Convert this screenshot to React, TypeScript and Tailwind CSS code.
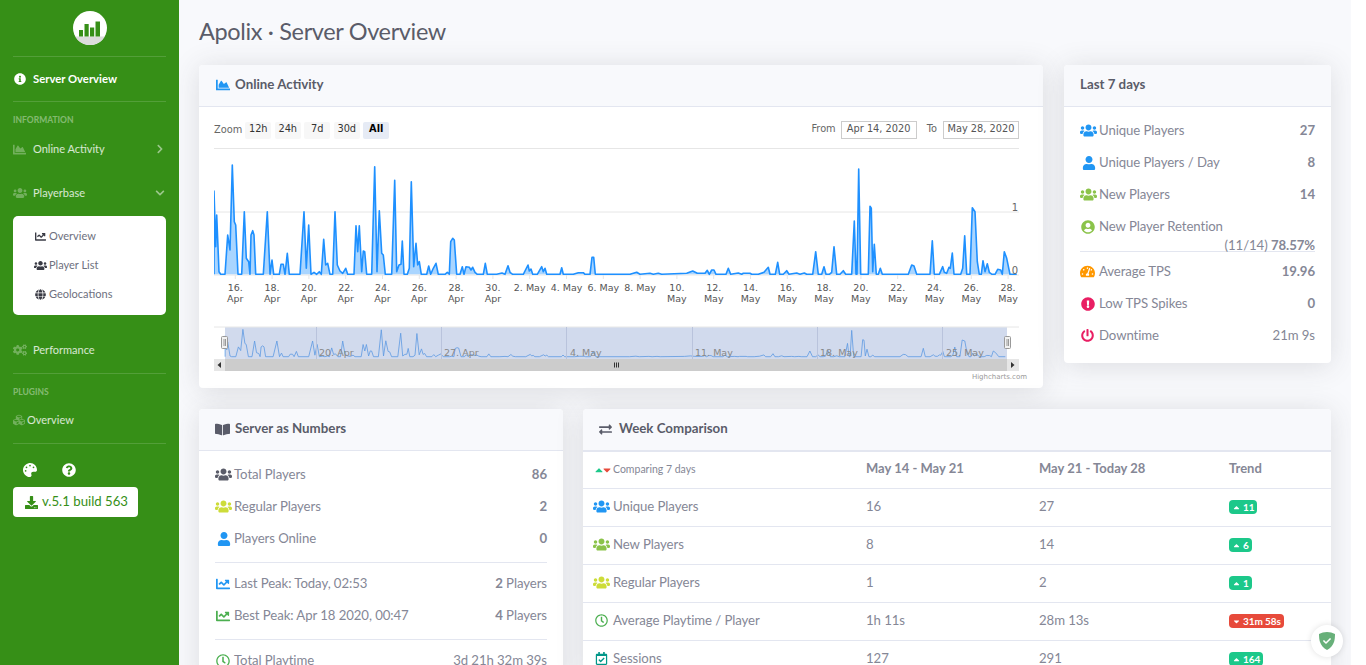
import type { ReactNode } from 'react'
import {
  FaBookOpen,
  FaCaretDown,
  FaCaretUp,
  FaChartArea,
  FaChartLine,
  FaCheck,
  FaChevronDown,
  FaChevronRight,
  FaCogs,
  FaCubes,
  FaDownload,
  FaExchangeAlt,
  FaExclamationCircle,
  FaGlobe,
  FaInfoCircle,
  FaPalette,
  FaPowerOff,
  FaQuestionCircle,
  FaRegCalendarCheck,
  FaRegClock,
  FaTachometerAlt,
  FaUser,
  FaUserCircle,
  FaUsers,
} from 'react-icons/fa'

// points read off the chart, in 3x crop coordinates
const leftPts = [
  [42, 628], [42, 378], [47, 545], [50, 450], [57, 620], [62, 628], [75, 628], [83, 510], [90, 555], [97, 300], [103, 470], [107, 480], [114, 628], [125, 628], [133, 440], [139, 580], [146, 590], [150, 628], [153, 510], [158, 497], [162, 510], [167, 628], [190, 628], [202, 440], [210, 628], [216, 585], [221, 628], [238, 628], [243, 598], [250, 598], [255, 628], [262, 565], [268, 628], [300, 628], [312, 440], [319, 610], [326, 480], [333, 628], [342, 622], [350, 628], [358, 620], [364, 628], [371, 523], [377, 600], [383, 595], [390, 628], [398, 628], [405, 440], [412, 600], [420, 618], [428, 625], [437, 610], [443, 628], [462, 628], [468, 482], [473, 560], [478, 482], [485, 620], [490, 558], [494, 560], [500, 628], [515, 628], [524, 305], [531, 620], [538, 437], [545, 565], [550, 570], [556, 628], [575, 628], [584, 346], [590, 620], [597, 600], [603, 598], [607, 528], [612, 628], [622, 628], [628, 610], [634, 350], [641, 605], [648, 535], [653, 600], [658, 590], [664, 628], [680, 628], [686, 603], [692, 628], [700, 610], [708, 595], [715, 628], [735, 628], [742, 622], [748, 628], [752, 530], [758, 520], [763, 525], [770, 628], [780, 628], [787, 605], [792, 628], [798, 605], [808, 607], [813, 615], [818, 607], [825, 622], [832, 628], [850, 628], [856, 595], [862, 628], [890, 628], [906, 624], [915, 628], [924, 602], [930, 622], [938, 628], [970, 628], [984, 600], [988, 618], [993, 612], [998, 628], [1012, 628], [1025, 605], [1030, 620], [1035, 610], [1040, 628], [1080, 628], [1085, 608], [1090, 628], [1120, 628], [1135, 623], [1150, 623], [1155, 628], [1170, 628], [1176, 577], [1181, 577], [1186, 628],
]
const rightPts = [
  [30, 628], [50, 622], [60, 628], [90, 625], [100, 628], [115, 625], [125, 628], [200, 625], [218, 618], [232, 625], [255, 625], [262, 616], [268, 628], [275, 615], [282, 615], [288, 628], [318, 628], [325, 610], [332, 628], [355, 624], [365, 628], [370, 625], [390, 625], [395, 628], [415, 628], [432, 622], [445, 607], [450, 628], [466, 628], [473, 592], [479, 628], [490, 628], [500, 617], [507, 628], [530, 624], [540, 628], [553, 624], [560, 628], [578, 628], [587, 560], [595, 628], [605, 628], [612, 605], [618, 628], [628, 628], [635, 622], [642, 545], [650, 628], [660, 628], [670, 617], [677, 628], [695, 628], [703, 468], [708, 628], [711, 628], [716, 312], [722, 628], [745, 628], [750, 424], [754, 430], [758, 620], [763, 538], [769, 628], [775, 628], [781, 610], [787, 628], [865, 628], [875, 600], [882, 603], [890, 628], [930, 628], [937, 527], [943, 628], [958, 628], [968, 605], [973, 622], [980, 625], [987, 607], [991, 610], [997, 564], [1002, 628], [1022, 628], [1028, 610], [1034, 512], [1040, 628], [1050, 628], [1057, 428], [1065, 440], [1072, 590], [1078, 628], [1084, 628], [1089, 587], [1095, 620], [1102, 596], [1108, 622], [1116, 628], [1125, 628], [1133, 613], [1142, 615], [1147, 628], [1153, 560], [1160, 580], [1170, 628], [1190, 628],
]
const points = [
  ...leftPts.map(([x, y]) => [x / 3 + 200, y / 3 + 65]),
  ...rightPts.map(([x, y]) => [x / 3 + 620, y / 3 + 65]),
]
const base = 628 / 3 + 65
const line = points.map(([x, y]) => `${x.toFixed(1)},${y.toFixed(1)}`).join(' ')
const area = `${points[0][0]},${base} ${line} ${points[points.length - 1][0]},${base}`
const navLine = points
  .map(([x, y]) => `${(17.1 + x * 0.972).toFixed(1)},${(356.7 - (base - y) * 0.25).toFixed(1)}`)
  .join(' ')

const tickLabels = [
  ['16.', 'Apr'], ['18.', 'Apr'], ['20.', 'Apr'], ['22.', 'Apr'], ['24.', 'Apr'], ['26.', 'Apr'], ['28.', 'Apr'], ['30.', 'Apr'],
  ['2. May'], ['4. May'], ['6. May'], ['8. May'],
  ['10.', 'May'], ['12.', 'May'], ['14.', 'May'], ['16.', 'May'], ['18.', 'May'], ['20.', 'May'], ['22.', 'May'], ['24.', 'May'], ['26.', 'May'], ['28.', 'May'],
]
const navLabels: [number, string][] = [[319, '20. Apr'], [444, '27. Apr'], [570, '4. May'], [695, '11. May'], [820, '18. May'], [946, '25. May']]

function ActivityChart() {
  return (
    <svg viewBox="214 146 815 236" className="block h-[236px] w-[815px] [font-family:'DejaVu_Sans',sans-serif]">
      <line x1="214" x2="1019" y1="148.5" y2="148.5" stroke="#e6e6e6" />
      <line x1="214" x2="1019" y1="212" y2="212" stroke="#e6e6e6" />
      <line x1="214" x2="1019" y1="275" y2="275" stroke="#e6e6e6" />
      <polygon points={area} fill="#1e90ff" fillOpacity="0.38" />
      <polyline points={line} fill="none" stroke="#1e90ff" strokeWidth="1.6" strokeLinejoin="round" />
      <text x="1018" y="211" textAnchor="end" fontSize="10" fill="#666">1</text>
      <text x="1018" y="274" textAnchor="end" fontSize="10" fill="#666">0</text>
      {tickLabels.map((t, i) => {
        const x = 235.3 + 36.8 * i
        return (
          <g key={i}>
            <line x1={x} x2={x} y1="275" y2="279" stroke="#e6e6e6" />
            {t.map((s, j) => (
              <text key={s} x={x} y={290.5 + j * 11} textAnchor="middle" fontSize="9.5" fill="#555">
                {s}
              </text>
            ))}
          </g>
        )
      })}

      {/* navigator */}
      <line x1="214" x2="1019" y1="327" y2="327" stroke="#e6e6e6" />
      <polyline points={navLine} fill="none" stroke="#5ba4f0" strokeOpacity="0.8" strokeWidth="1" />
      <rect x="225" y="327.5" width="782" height="31.5" fill="#6685c2" fillOpacity="0.3" />
      {[316, 441, 566, 692, 817, 942].map((x) => (
        <line key={x} x1={x + 0.5} x2={x + 0.5} y1="327" y2="359" stroke="#b9c3dc" />
      ))}
      {navLabels.map(([x, s]) => (
        <text key={s} x={x} y="356" fontSize="9.5" fill="#888">{s}</text>
      ))}
      {[221.5, 1004.5].map((x) => (
        <g key={x}>
          <rect x={x} y="336.5" width="6" height="12" rx="1" fill="#f2f2f2" stroke="#999" />
          <line x1={x + 2.5} x2={x + 2.5} y1="339" y2="346" stroke="#999" />
          <line x1={x + 4} x2={x + 4} y1="339" y2="346" stroke="#999" />
        </g>
      ))}
      <rect x="213" y="359" width="806" height="12" fill="#cccccc" />
      <rect x="213" y="359" width="12" height="12" fill="#e6e6e6" />
      <rect x="1007" y="359" width="12" height="12" fill="#e6e6e6" />
      <polygon points="221,362 217.5,365 221,368" fill="#333" />
      <polygon points="1011,362 1014.5,365 1011,368" fill="#333" />
      {[614.5, 616.5, 618.5].map((x) => (
        <line key={x} x1={x} x2={x} y1="362.5" y2="367.5" stroke="#333" />
      ))}
      <text x="1027" y="379" textAnchor="end" fontSize="7" fill="#999">Highcharts.com</text>
    </svg>
  )
}

function Logo() {
  return (
    <svg viewBox="0 0 34 34" className="h-[34px] w-[34px]">
      <circle cx="17" cy="17" r="17" fill="#fff" />
      <path d="M2.2 25.5h29.6A17 17 0 0 1 2.2 25.5z" fill="#dcdcdc" />
      <path d="M6 19h4v6.5H6zM11.5 13h4.2v12.5h-4.2zM17 16.5h4.2v9H17zM22.5 10.5h4.500v15h-4.500z" fill="#368f17" />
    </svg>
  )
}

function SideHr() {
  return <div className="mx-[13px] h-px bg-white/15" />
}

function SideItem({ icon, label, right, active }: { icon: ReactNode; label: string; right?: ReactNode; active?: boolean }) {
  return (
    <div className={`flex h-[44px] items-center pl-[13px] pr-[14px] ${active ? 'text-[11.3px] font-bold text-white' : 'text-[11px] text-white/80'}`}>
      <span className={`flex w-[20px] shrink-0 ${active ? 'pl-px text-white' : 'text-white/30'}`}>{icon}</span>
      <span className="flex-1">{label}</span>
      {right}
    </div>
  )
}

function SubItem({ icon, label }: { icon: ReactNode; label: string }) {
  return (
    <div className="flex h-[29px] items-center pl-[19px] text-[11px] text-[#6e707e]">
      <span className="flex w-[17px] shrink-0 justify-center text-[#3a3b45]">{icon}</span>
      {label}
    </div>
  )
}

function Sidebar() {
  return (
    <aside className="flex h-[665px] w-[179px] shrink-0 flex-col bg-[#368f17]">
      <div className="flex h-[56px] justify-center pt-[11px]">
        <Logo />
      </div>
      <SideHr />
      <SideItem active icon={<FaInfoCircle className="text-[12px]" />} label="Server Overview" />
      <SideHr />
      <div className="h-[25px] pl-[13px] pt-[12px] text-[8.5px] font-bold leading-[12px] text-white/40">INFORMATION</div>
      <SideItem
        icon={<FaChartArea className="text-[13px]" />}
        label="Online Activity"
        right={<FaChevronRight className="text-[10px] text-white/50" />}
      />
      <SideItem
        icon={<FaUsers className="text-[14px]" />}
        label="Playerbase"
        right={<FaChevronDown className="text-[10px] text-white/50" />}
      />
      <div className="mx-[13px] mt-px rounded-[5px] bg-white py-[6px]">
        <SubItem icon={<FaChartLine className="text-[11px]" />} label="Overview" />
        <SubItem icon={<FaUsers className="text-[13px]" />} label="Player List" />
        <SubItem icon={<FaGlobe className="text-[11px]" />} label="Geolocations" />
      </div>
      <div className="mt-[13px]">
        <SideItem icon={<FaCogs className="text-[14px]" />} label="Performance" />
      </div>
      <div className="mt-px">
        <SideHr />
      </div>
      <div className="h-[24px] pl-[13px] pt-[12px] text-[8.5px] font-bold leading-[12px] text-white/40">PLUGINS</div>
      <div className="flex h-[44px] items-center pl-[13px] text-[11px] text-white/80">
        <span className="flex w-[14px] shrink-0 text-white/30">
          <FaCubes className="text-[12px]" />
        </span>
        Overview
      </div>
      <div className="mt-px">
        <SideHr />
      </div>
      <div className="mt-[19px] flex items-center pl-[23px] text-white">
        <FaPalette className="text-[14px]" />
        <FaQuestionCircle className="ml-[25px] text-[14px]" />
      </div>
      <div className="ml-[13px] mt-[10px] flex h-[30px] w-[125px] items-center rounded-[4px] bg-white pl-[12px] text-[13.2px] text-[#368f17]">
        <FaDownload className="mr-[4px] text-[13px]" />
        v.5.1 build 563
      </div>
    </aside>
  )
}

function Card({ title, icon, className, children }: { title: string; icon?: ReactNode; className: string; children: ReactNode }) {
  return (
    <section className={`rounded-[4px] bg-white shadow-[0_2.4px_28px_0_rgba(58,59,69,0.15)] ${className}`}>
      <header className="flex h-[42px] items-center gap-[5px] rounded-t-[4px] border-b border-[#e3e6f0] bg-[#f8f9fc] pb-px pl-[16px] text-[13.3px] font-bold text-[#5a5c69]">
        {icon}
        {title}
      </header>
      {children}
    </section>
  )
}

function StatRow({ icon, label, value }: { icon: ReactNode; label: string; value: ReactNode }) {
  return (
    <div className="flex h-[32px] items-center pb-px text-[13.2px] tracking-[-0.08px] text-[#858796]">
      <span className="flex w-[19px] shrink-0">{icon}</span>
      <span className="flex-1">{label}</span>
      <span>{value}</span>
    </div>
  )
}

function Hr({ className }: { className: string }) {
  return <div className={`h-px bg-[#e3e6f0] ${className}`} />
}

function ZoomBtn({ label, active }: { label: string; active?: boolean }) {
  return (
    <span className={`flex h-[17px] w-[26px] items-center justify-center rounded-[2px] pb-px ${active ? 'bg-[#e6ebf5] font-bold text-black' : 'bg-[#f7f7f7] text-[#333]'}`}>
      {label}
    </span>
  )
}

function DateBox({ label }: { label: string }) {
  return <span className="flex h-[18px] w-[76px] items-center justify-center border border-[#cccccc] pb-px text-[#555]">{label}</span>
}

function OnlineActivityCard() {
  return (
    <Card title="Online Activity" icon={<FaChartArea className="ml-px text-[14px] text-[#2196f3]" />} className="w-[844px]">
      <div className="h-[281px] pl-[15px] pt-[14px]">
        <div className="flex h-[18px] w-[805px] items-center text-[9.8px] [font-family:'DejaVu_Sans',sans-serif]">
          <span className="mr-[3px] text-[#666]">Zoom</span>
          <div className="flex gap-[3.5px]">
            <ZoomBtn label="12h" />
            <ZoomBtn label="24h" />
            <ZoomBtn label="7d" />
            <ZoomBtn label="30d" />
            <ZoomBtn label="All" active />
          </div>
          <span className="ml-auto mr-[5px] pb-px text-[#666]">From</span>
          <DateBox label="Apr 14, 2020" />
          <span className="ml-[10px] mr-[6px] pb-px text-[#666]">To</span>
          <DateBox label="May 28, 2020" />
        </div>
        <div className="mt-[7px]">
          <ActivityChart />
        </div>
      </div>
    </Card>
  )
}

function LastDaysCard() {
  return (
    <Card title="Last 7 days" className="w-[267px]">
      <div className="px-[16px] pb-[11px] pt-[8px]">
        <StatRow icon={<FaUsers className="text-[17px] text-[#2196f3]" />} label="Unique Players" value={<b>27</b>} />
        <StatRow icon={<FaUser className="ml-[2px] text-[14px] text-[#2196f3]" />} label="Unique Players / Day" value={<b>8</b>} />
        <StatRow icon={<FaUsers className="text-[17px] text-[#8bc34a]" />} label="New Players" value={<b>14</b>} />
        <StatRow icon={<FaUserCircle className="ml-px text-[14px] text-[#8bc34a]" />} label="New Player Retention" value="" />
        <div className="-mt-[6px] h-[16px] text-right text-[13.2px] leading-[16px] tracking-[-0.08px] text-[#858796]">
          (11/14) <b>78.57%</b>
        </div>
        <Hr className="-mt-[2px] mb-[4px]" />
        <StatRow icon={<FaTachometerAlt className="text-[15px] text-[#ff9800]" />} label="Average TPS" value={<b>19.96</b>} />
        <StatRow icon={<FaExclamationCircle className="ml-px text-[14px] text-[#e91e63]" />} label="Low TPS Spikes" value={<b>0</b>} />
        <StatRow icon={<FaPowerOff className="ml-px text-[13px] text-[#e91e63]" />} label="Downtime" value="21m 9s" />
      </div>
    </Card>
  )
}

function NumbersCard() {
  return (
    <Card title="Server as Numbers" icon={<FaBookOpen className="text-[15px] text-[#5a5c69]" />} className="w-[364px]">
      <div className="px-[16px] pb-[10px] pt-[8px]">
        <StatRow icon={<FaUsers className="text-[17px] text-[#5a5c69]" />} label="Total Players" value={<b>86</b>} />
        <StatRow icon={<FaUsers className="text-[17px] text-[#cddc39]" />} label="Regular Players" value={<b>2</b>} />
        <StatRow icon={<FaUser className="ml-[2px] text-[14px] text-[#2196f3]" />} label="Players Online" value={<b>0</b>} />
        <Hr className="mb-[5px] mt-[7px]" />
        <StatRow icon={<FaChartLine className="ml-px text-[14px] text-[#2196f3]" />} label="Last Peak: Today, 02:53" value={<><b>2</b> Players</>} />
        <StatRow icon={<FaChartLine className="ml-px text-[14px] text-[#4caf50]" />} label="Best Peak: Apr 18 2020, 00:47" value={<><b>4</b> Players</>} />
        <Hr className="mb-[5px] mt-[7px]" />
        <StatRow icon={<FaRegClock className="ml-px text-[14px] text-[#4caf50]" />} label="Total Playtime" value="3d 21h 32m 39s" />
      </div>
    </Card>
  )
}

function Trend({ value, down }: { value: string; down?: boolean }) {
  return (
    <span className={`inline-flex h-[14px] items-center rounded-[4px] px-[3px] text-[10px] font-bold text-white ${down ? 'bg-[#e74a3b]' : 'bg-[#1cc88a]'}`}>
      {down ? <FaCaretDown className="mr-[2px] text-[9px]" /> : <FaCaretUp className="mr-[2px] text-[9px]" />}
      {value}
    </span>
  )
}

const weekRows = [
  { icon: <FaUsers className="text-[17px] text-[#2196f3]" />, label: 'Unique Players', a: '16', b: '27', trend: '11' },
  { icon: <FaUsers className="text-[17px] text-[#8bc34a]" />, label: 'New Players', a: '8', b: '14', trend: '6' },
  { icon: <FaUsers className="text-[17px] text-[#cddc39]" />, label: 'Regular Players', a: '1', b: '2', trend: '1' },
  { icon: <FaRegClock className="ml-[2px] text-[13px] text-[#4caf50]" />, label: 'Average Playtime / Player', a: '1h 11s', b: '28m 13s', trend: '31m 58s', down: true },
  { icon: <FaRegCalendarCheck className="ml-[2px] text-[13px] text-[#009688]" />, label: 'Sessions', a: '127', b: '291', trend: '164' },
]

function WeekCard() {
  return (
    <Card title="Week Comparison" icon={<FaExchangeAlt className="mr-[2px] text-[13px] text-[#5a5c69]" />} className="w-[748px]">
      <div className="grid h-[38px] grid-cols-[273px_173px_190px_1fr] items-center border-t border-b border-[#e3e6f0] pb-[3px] pl-[10px] text-[13px] font-bold text-[#858796]">
        <span className="flex items-center pt-[3px] text-[10.5px] font-normal">
          <FaCaretUp className="text-[12px] text-[#1cc88a]" />
          <FaCaretDown className="-ml-[4px] text-[12px] text-[#e74a3b]" />
          Comparing 7 days
        </span>
        <span>May 14 - May 21</span>
        <span>May 21 - Today 28</span>
        <span>Trend</span>
      </div>
      {weekRows.map((r) => (
        <div key={r.label} className="grid h-[38px] grid-cols-[273px_173px_190px_1fr] items-center border-b border-[#e3e6f0] pl-[10px] text-[13.2px] tracking-[-0.08px] text-[#858796]">
          <span className="flex items-center pb-px">
            <span className="flex w-[20px] shrink-0">{r.icon}</span>
            {r.label}
          </span>
          <span className="pb-px">{r.a}</span>
          <span className="pb-px">{r.b}</span>
          <span>
            <Trend value={r.trend} down={r.down} />
          </span>
        </div>
      ))}
    </Card>
  )
}

function ShieldBadge() {
  return (
    <div className="absolute left-[1311px] top-[625px] flex h-[32px] w-[32px] items-center justify-center rounded-full bg-white shadow-[0_0_6px_rgba(0,0,0,0.12)]">
      <svg viewBox="0 0 16 18" className="h-[18px] w-[16px]">
        <path d="M8 0C5 0 2.500.8 0 2c0 6 .8 12 8 16 7.200-4 8-10 8-16C13.500.8 11 0 8 0z" fill="#68b07a" />
      </svg>
      <FaCheck className="absolute text-[8px] text-white" />
    </div>
  )
}

export default function App() {
  return (
    <div className="relative h-[665px] w-[1366px] overflow-hidden bg-white [font-family:Lato,sans-serif]">
      <div className="flex w-[1351px]">
        <Sidebar />
        <main className="h-[665px] flex-1 overflow-hidden bg-[#f8f9fc] pl-[20px]">
          <h1 className="flex h-[65px] items-center pb-px text-[23.5px] font-normal tracking-[-0.35px] text-[#5a5c69]">Apolix · Server Overview</h1>
          <div className="flex items-start gap-[21px]">
            <OnlineActivityCard />
            <LastDaysCard />
          </div>
          <div className="mt-[21px] flex items-start gap-[20px]">
            <NumbersCard />
            <WeekCard />
          </div>
        </main>
      </div>
      <ShieldBadge />
    </div>
  )
}
